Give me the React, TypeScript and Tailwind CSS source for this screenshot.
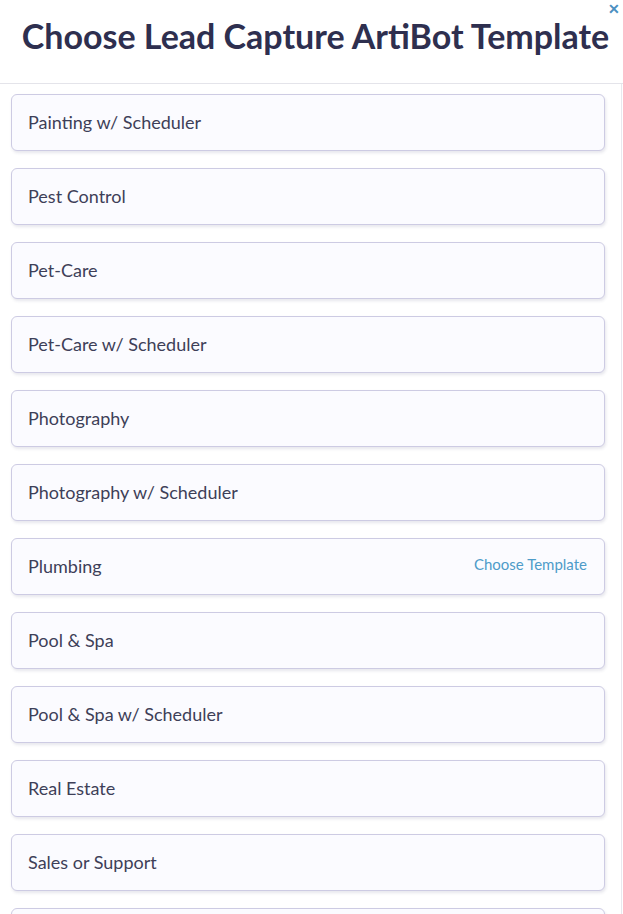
import React from 'react';

const templates = [
  'Painting w/ Scheduler',
  'Pest Control',
  'Pet-Care',
  'Pet-Care w/ Scheduler',
  'Photography',
  'Photography w/ Scheduler',
  'Plumbing',
  'Pool & Spa',
  'Pool & Spa w/ Scheduler',
  'Real Estate',
  'Sales or Support',
  '',
];

export default function App() {
  return (
    <div className="w-[623px] h-[914px] overflow-hidden bg-white flex flex-col font-['Lato',sans-serif]">
      <div className="relative h-[84px] shrink-0 border-b border-[#e4e4ea] flex justify-center pt-[12px]">
        <h1 className="text-[34px] leading-[48px] font-bold text-[#2e2f4f] pl-[8px]">
          Choose Lead Capture ArtiBot Template
        </h1>
        <button className="absolute right-[3px] top-[2px] text-[#4b8fc1] text-[14px] font-bold leading-none">
          ✕
        </button>
      </div>
      <div className="flex-1 w-[622px] border-r border-[#e8e8ee] pl-[11px] pt-[10px] flex flex-col gap-[17px]">
        {templates.map((t, i) => (
          <div
            key={i}
            className="w-[594px] h-[57px] shrink-0 rounded-[6px] border border-[#cdcbe3] bg-[#fbfbff] shadow-[1px_2px_3px_rgba(60,60,110,0.12)] flex items-center justify-between pl-[16px] pr-[17px]"
          >
            <span className="text-[18px] text-[#3e3f58]">{t}</span>
            {t === 'Plumbing' && (
              <span className="text-[15px] text-[#4e9cc9] -mt-[4px]">Choose Template</span>
            )}
          </div>
        ))}
      </div>
    </div>
  );
}
